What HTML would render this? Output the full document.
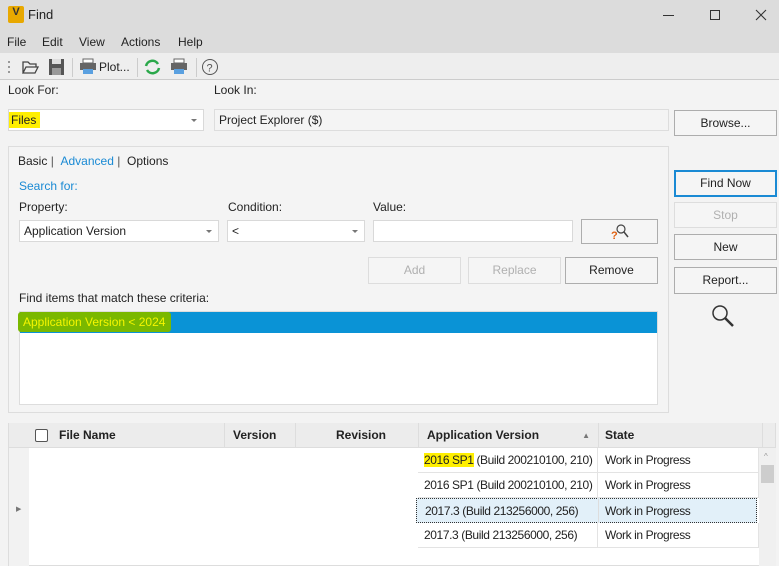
<!DOCTYPE html><html><head><style>
*{box-sizing:border-box;margin:0;padding:0}
body{width:779px;height:566px;overflow:hidden;background:#f3f3f3;font-family:"Liberation Sans",sans-serif;font-size:12px;color:#222;position:relative}
.a{position:absolute;white-space:nowrap}
.btn{position:absolute;border:1px solid #adadad;background:#f5f5f5;text-align:center;line-height:24px}
.dis{border-color:#ddd;color:#b0b0b0}
.cb{position:absolute;background:#fff;border:1px solid #d9d9d9;line-height:20px;padding-left:4px}
.cb:after{content:"";position:absolute;right:6px;top:9px;border:3px solid transparent;border-top:3px solid #777}
.hl{background:#ffef00}
.th{position:absolute;top:423px;height:25px;line-height:25px;font-weight:bold;border-right:1px solid #ddd;padding-left:7px;white-space:nowrap}
.cell{position:absolute;height:25px;line-height:25px;padding-left:7px;border-bottom:1px solid #e3e3e3;border-right:1px solid #e3e3e3;background:#fff;white-space:nowrap;overflow:hidden;letter-spacing:-0.4px}
</style></head><body>
<div class="a" style="left:0;top:0;width:779px;height:53px;background:#dcdcdc"></div>
<div class="a" style="left:8px;top:6px;width:16px;height:17px;background:#e8a800;border-radius:2px;color:#333;font-weight:bold;font-size:11px;text-align:center;line-height:13px">V</div>
<div class="a" style="left:28px;top:7px;font-size:13px">Find</div>
<div class="a" style="left:663px;top:15px;width:11px;height:1px;background:#333"></div>
<div class="a" style="left:710px;top:10px;width:10px;height:10px;border:1px solid #333"></div>
<svg class="a" style="left:755px;top:9px" width="12" height="12"><path d="M1 1l10 10M11 1L1 11" stroke="#333" stroke-width="1.1"/></svg>
<div class="a" style="left:7px;top:35px">File</div><div class="a" style="left:42px;top:35px">Edit</div><div class="a" style="left:79px;top:35px">View</div><div class="a" style="left:121px;top:35px">Actions</div><div class="a" style="left:178px;top:35px">Help</div>
<div class="a" style="left:0;top:53px;width:779px;height:27px;background:#eeeeee;border-bottom:1px solid #ccc"></div>
<svg class="a" style="left:0;top:56px" width="230" height="22">
<g fill="#999"><rect x="8" y="5" width="2" height="2"/><rect x="8" y="10" width="2" height="2"/><rect x="8" y="15" width="2" height="2"/></g>
<path d="M23 17V6h5l2 2h6v3M23 17l3-6h12l-3 6z" fill="none" stroke="#444" stroke-width="1.3"/>
<rect x="49" y="3" width="15" height="16" fill="#555"/><rect x="52" y="3" width="9" height="5" fill="#ddd"/><rect x="52" y="12" width="9" height="7" fill="#999"/>
<rect x="72" y="2" width="1" height="19" fill="#ccc"/>
<rect x="80" y="7" width="16" height="7" fill="#666"/><rect x="83" y="3" width="10" height="4" fill="#fff" stroke="#666"/><rect x="83" y="13" width="10" height="5" fill="#5aa0e0"/>
<text x="99" y="15" font-family="Liberation Sans" font-size="12" fill="#222">Plot...</text>
<rect x="137" y="2" width="1" height="19" fill="#ccc"/>
<path d="M146 10a6.5 6.5 0 0 1 12-2M159 12a6.5 6.5 0 0 1-12 2" fill="none" stroke="#2aa84a" stroke-width="2.5"/>
<rect x="171" y="7" width="16" height="7" fill="#666"/><rect x="174" y="3" width="10" height="4" fill="#fff" stroke="#666"/><rect x="174" y="13" width="10" height="5" fill="#5aa0e0"/>
<rect x="196" y="2" width="1" height="19" fill="#ccc"/>
<circle cx="210" cy="11" r="7.5" fill="none" stroke="#555"/><text x="206.5" y="15.5" font-family="Liberation Sans" font-size="11" fill="#555">?</text>
</svg>
<div class="a" style="left:8px;top:83px">Look For:</div>
<div class="a" style="left:214px;top:83px">Look In:</div>
<div class="cb" style="left:8px;top:109px;width:196px;height:22px"><span class="hl" style="padding:1px 4px 1px 2px;margin-left:-4px">Files</span></div>
<div class="a" style="left:214px;top:109px;width:455px;height:22px;border:1px solid #ddd;background:#f4f4f4;line-height:20px;padding-left:4px">Project Explorer ($)</div>
<div class="btn" style="left:674px;top:110px;width:103px;height:26px">Browse...</div>
<div class="a" style="left:8px;top:146px;width:661px;height:267px;border:1px solid #ddd;background:#f4f4f4"></div>
<div class="a" style="left:18px;top:154px">Basic <span style="color:#555">|</span> <span style="color:#1a8ad4">&nbsp;Advanced</span> <span style="color:#555">|</span> &nbsp;Options</div>
<div class="a" style="left:19px;top:179px;color:#1a8ad4">Search for:</div>
<div class="a" style="left:19px;top:200px">Property:</div><div class="a" style="left:228px;top:200px">Condition:</div><div class="a" style="left:373px;top:200px">Value:</div>
<div class="cb" style="left:19px;top:220px;width:200px;height:22px">Application Version</div>
<div class="cb" style="left:227px;top:220px;width:138px;height:22px">&lt;</div>
<div class="a" style="left:373px;top:220px;width:200px;height:22px;background:#fff;border:1px solid #d9d9d9"></div>
<div class="btn" style="left:581px;top:219px;width:77px;height:25px"></div>
<svg class="a" style="left:610px;top:222px" width="20" height="20"><text x="1" y="17" font-family="Liberation Sans" font-weight="bold" font-size="11" fill="#e06010">?</text><circle cx="11" cy="7" r="4" fill="none" stroke="#444" stroke-width="1.2"/><path d="M14 10l4 5" stroke="#444" stroke-width="1.5"/></svg>
<div class="btn dis" style="left:368px;top:257px;width:93px;height:27px">Add</div>
<div class="btn dis" style="left:468px;top:257px;width:93px;height:27px">Replace</div>
<div class="btn" style="left:565px;top:257px;width:93px;height:27px">Remove</div>
<div class="a" style="left:19px;top:291px">Find items that match these criteria:</div>
<div class="a" style="left:19px;top:311px;width:639px;height:94px;background:#fff;border:1px solid #ddd"></div>
<div class="a" style="left:20px;top:312px;width:637px;height:21px;background:#0a93d6"></div>
<div class="a" style="left:18px;top:312px;width:153px;height:20px;background:#7ab800;border-radius:3px"></div>
<div class="a" style="left:23px;top:315px;color:#f5f500">Application Version &lt; 2024</div>
<div class="btn" style="left:674px;top:170px;width:103px;height:27px;border:2px solid #1a8ad4;line-height:23px">Find Now</div>
<div class="btn dis" style="left:674px;top:202px;width:103px;height:26px">Stop</div>
<div class="btn" style="left:674px;top:234px;width:103px;height:26px">New</div>
<div class="btn" style="left:674px;top:267px;width:103px;height:27px">Report...</div>
<svg class="a" style="left:710px;top:303px" width="28" height="26"><circle cx="10" cy="10" r="7" fill="none" stroke="#333" stroke-width="1.5"/><path d="M15 15l8 8" stroke="#333" stroke-width="2.5"/></svg>
<div class="a" style="left:8px;top:423px;width:768px;height:143px;background:#fff;border:1px solid #ddd"></div>
<div class="a" style="left:9px;top:423px;width:766px;height:25px;background:#ececec;border-bottom:1px solid #ddd"></div>
<div class="a" style="left:35px;top:429px;width:13px;height:13px;border:1px solid #555;border-radius:2px;background:#fff"></div>
<div class="th" style="left:52px;width:173px">File Name</div>
<div class="th" style="left:226px;width:70px">Version</div>
<div class="th" style="left:296px;width:123px;padding-left:40px">Revision</div>
<div class="th" style="left:420px;width:179px">Application Version<span style="position:absolute;right:8px;font-size:8px;color:#777">▲</span></div>
<div class="th" style="left:598px;width:165px">State</div>
<div class="a" style="left:9px;top:448px;width:20px;height:118px;background:#f2f2f2"></div>
<div class="a" style="left:16px;top:505px;font-size:7px;color:#777">▶</div>
<div class="cell" style="left:418px;top:448px;width:180px;padding-left:6px"><span class="hl">2016 SP1</span> (Build 200210100, 210)</div>
<div class="cell" style="left:598px;top:448px;width:161px">Work in Progress</div>
<div class="cell" style="left:418px;top:473px;width:180px;padding-left:6px">2016 SP1 (Build 200210100, 210)</div>
<div class="cell" style="left:598px;top:473px;width:161px">Work in Progress</div>
<div class="a" style="left:416px;top:498px;width:341px;height:25px;background:#e2f0f9;border:1px dotted #333"></div>
<div class="a" style="left:425px;top:504px;letter-spacing:-0.4px">2017.3 (Build 213256000, 256)</div><div class="a" style="left:605px;top:504px;letter-spacing:-0.4px">Work in Progress</div>
<div class="a" style="left:598px;top:498px;width:1px;height:25px;background:#ddd"></div>
<div class="cell" style="left:418px;top:523px;width:180px;padding-left:6px">2017.3 (Build 213256000, 256)</div>
<div class="cell" style="left:598px;top:523px;width:161px">Work in Progress</div>
<div class="a" style="left:759px;top:448px;width:17px;height:118px;background:#f0f0f0"></div>
<div class="a" style="left:764px;top:452px;font-size:8px;color:#999">^</div>
<div class="a" style="left:761px;top:465px;width:13px;height:18px;background:#cdcdcd"></div>
</body></html>
